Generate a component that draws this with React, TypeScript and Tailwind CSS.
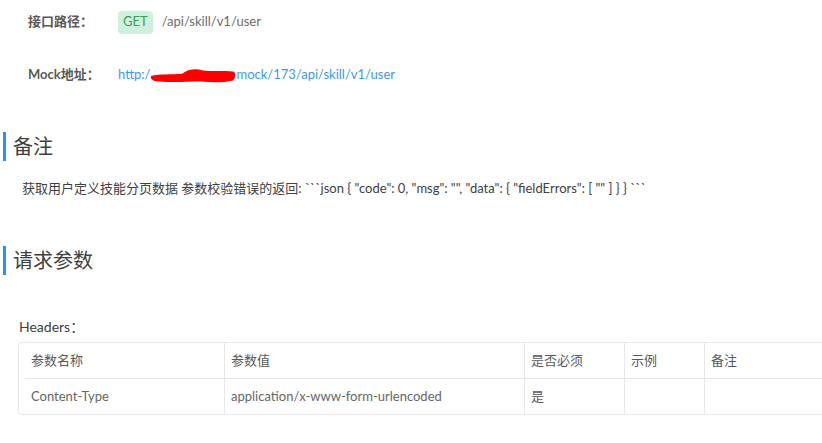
import React from "react";

const font = { fontFamily: '"Lato", "Noto Sans CJK SC", sans-serif' };

function Heading({ children }: { children: React.ReactNode }) {
  return (
    <div className="ml-[3px] flex h-[29px] items-center border-l-[3px] border-[#2395f1] pl-[7px] text-[20px] leading-[29px] text-[#404040]">
      {children}
    </div>
  );
}

export default function App() {
  const cols = "grid grid-cols-[199px_300px_100px_80px_1fr]";
  return (
    <div className="w-[822px] h-[443px] overflow-hidden bg-white pt-[10px]" style={font}>
      <div className="flex h-[24px] items-center pl-[28px]">
        <div className="w-[90px] text-[13px] font-bold text-[#595959]">接口路径：</div>
        <span className="flex h-[23px] items-center rounded-[4px] bg-[#cff1dc] px-[5px] text-[13px] text-[#3d9b5c]">GET</span>
        <span className="ml-[9px] text-[13px] text-[#6b6b6b]">/api/skill/v1/user</span>
      </div>
      <div className="mt-[29px] flex h-[24px] items-center pl-[28px]">
        <div className="w-[90px] text-[13px] font-bold text-[#595959]">Mock地址：</div>
        <span className="relative whitespace-nowrap text-[13px] text-[#3d97f0]">
          http:/<span className="inline-block w-[86px]"></span>mock/173/api/skill/v1/user
          <svg className="absolute left-[32px] top-[1px]" width="87" height="20" viewBox="0 0 92 18" preserveAspectRatio="none">
            <path
              d="M1 9 C 10 7, 22 8, 34 7 C 40 3, 48 2, 56 4 C 66 5, 78 4, 88 5 C 91 6, 91 10, 88 13 C 78 15, 66 15, 54 14 C 40 14, 24 15, 10 14 C 4 14, 0 12, 1 9 Z"
              fill="#ff0000"
            />
          </svg>
        </span>
      </div>

      <div className="mt-[45px]">
        <Heading>备注</Heading>
      </div>
      <p className="mt-[17px] pl-[22px] text-[13px] leading-[20px] text-[#404040]">
        获取用户定义技能分页数据 参数校验错误的返回: ```json {"{"} "code": 0, "msg": "", "data": {"{"} "fieldErrors": [ "" ] {"}"} {"}"} ```
      </p>

      <div className="mt-[48px]">
        <Heading>请求参数</Heading>
      </div>

      <div className="mt-[42px] pl-[19px] text-[14px] leading-[20px] text-[#404040]">Headers：</div>

      <div className="ml-[18px] mt-[5px] w-[830px] rounded-[4px] border border-[#e8e8e8] pl-[6px] text-[13px] text-[#595959]">
        <div className={cols + " h-[36px] border-b border-[#e8e8e8]"}>
          <div className="flex items-center pl-[6px]">参数名称</div>
          <div className="flex items-center border-l border-[#e8e8e8] pl-[6px]">参数值</div>
          <div className="flex items-center border-l border-[#e8e8e8] pl-[6px]">是否必须</div>
          <div className="flex items-center border-l border-[#e8e8e8] pl-[6px]">示例</div>
          <div className="flex items-center border-l border-[#e8e8e8] pl-[6px]">备注</div>
        </div>
        <div className={cols + " h-[35px]"}>
          <div className="flex items-center pl-[6px] text-[#666]">Content-Type</div>
          <div className="flex items-center border-l border-[#e8e8e8] pl-[6px] text-[#666]">application/x-www-form-urlencoded</div>
          <div className="flex items-center border-l border-[#e8e8e8] pl-[6px]">是</div>
          <div className="flex items-center border-l border-[#e8e8e8] pl-[6px]"></div>
          <div className="flex items-center border-l border-[#e8e8e8] pl-[6px]"></div>
        </div>
      </div>
    </div>
  );
}
